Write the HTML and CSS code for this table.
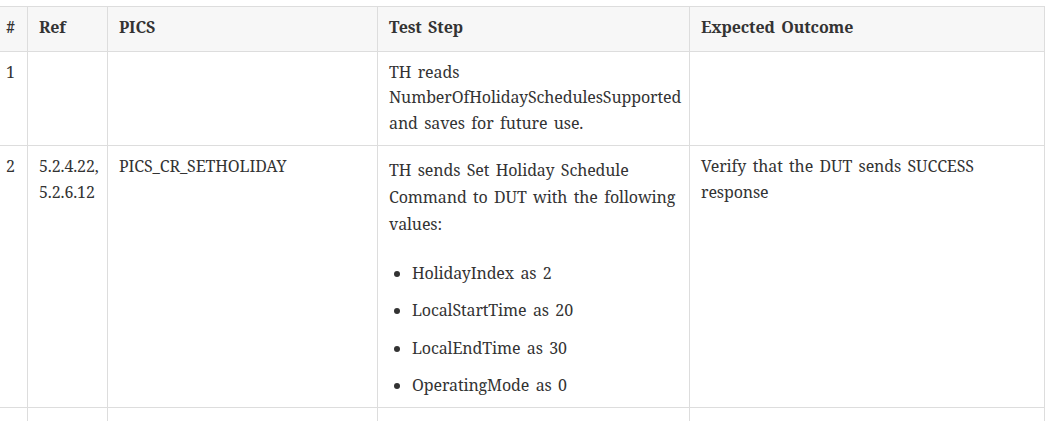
FILE: index.html
```html
<!DOCTYPE html>
<html lang="en">
<head>
<meta charset="utf-8">
<title>Test steps</title>
<link rel="stylesheet" href="styles.css">
</head>
<body>
<div class="wrap">
<table class="steps">
  <colgroup>
    <col class="c-num">
    <col class="c-ref">
    <col class="c-pics">
    <col class="c-step">
    <col class="c-out">
  </colgroup>
  <thead>
    <tr>
      <th>#</th>
      <th>Ref</th>
      <th>PICS</th>
      <th>Test Step</th>
      <th>Expected Outcome</th>
    </tr>
  </thead>
  <tbody>
    <tr>
      <td>1</td>
      <td></td>
      <td></td>
      <td>TH reads NumberOfHolidaySchedulesSupported and saves for future use.</td>
      <td></td>
    </tr>
    <tr>
      <td>2</td>
      <td>5.2.4.22, 5.2.6.12</td>
      <td>PICS_CR_SETHOLIDAY</td>
      <td class="step">
        <p class="lead">TH sends Set Holiday Schedule Command to DUT with the following values:</p>
        <ul class="vals">
          <li>HolidayIndex as 2</li>
          <li>LocalStartTime as 20</li>
          <li>LocalEndTime as 30</li>
          <li>OperatingMode as 0</li>
        </ul>
      </td>
      <td>Verify that the DUT sends SUCCESS response</td>
    </tr>
    <tr class="next">
      <td></td><td></td><td></td><td></td><td></td>
    </tr>
  </tbody>
</table>
</div>
</body>
</html>
```

FILE: styles.css
```css
html, body {
  margin: 0;
  padding: 0;
  background: #ffffff;
}

body {
  font-family: "Noto Serif", "DejaVu Serif", serif;
  font-size: 16px;
  line-height: 1.6;
  color: #333333;
  overflow: hidden;
}

.wrap {
  padding-top: 6px;
  margin-left: -7px;
}

.steps {
  border-collapse: collapse;
  table-layout: fixed;
  width: 1051px;
  word-spacing: 2.4px;
  letter-spacing: -0.12px;
}

.c-num { width: 34px; }
.c-ref { width: 80px; }
.c-pics { width: 270px; }
.c-step { width: 312px; }
.c-out { width: 355px; }

.steps th,
.steps td {
  border: 1px solid #dddddd;
  padding: 8px 11px 9px 11px;
  text-align: left;
  vertical-align: top;
}

.steps th {
  background: #f7f7f7;
  font-weight: bold;
  padding-top: 8px;
  padding-bottom: 10px;
}

.steps td:first-child,
.steps th:first-child {
  padding-left: 12px;
  padding-right: 4px;
}

.steps td.step {
  padding-bottom: 8px;
}

.lead {
  margin: 3px 0 0 0;
  line-height: 27px;
}

.vals {
  margin: 21.5px 0 0 0;
  padding-left: 23px;
  line-height: 27px;
}

.vals li + li {
  margin-top: 10.5px;
}

.next td {
  height: 40px;
}
```
